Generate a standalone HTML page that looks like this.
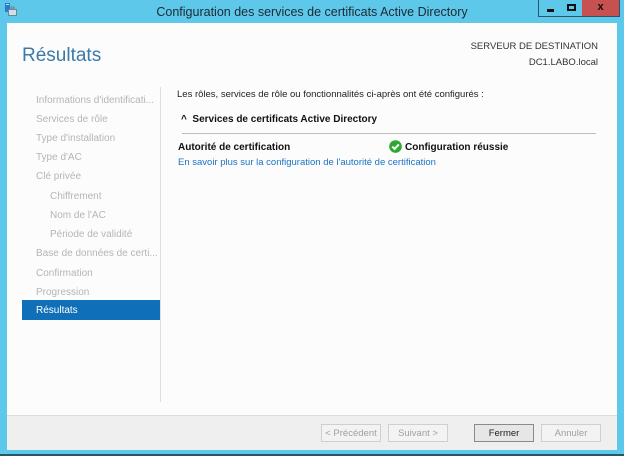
<!DOCTYPE html>
<html><head><meta charset="utf-8"><style>
*{margin:0;padding:0;box-sizing:border-box}
body{width:624px;height:456px;background:#5ec8ea;font-family:"Liberation Sans","DejaVu Sans",sans-serif;position:relative;overflow:hidden}
.abs{position:absolute}
.title{left:0;right:0;top:5px;text-align:center;font-size:12.5px;color:#1a2a33}
.content{left:7px;top:23px;width:610px;height:392px;background:#fcfcfc}
.footer{left:7px;top:415px;width:610px;height:35px;background:#efefef;border-top:1px solid #dcdcdc}
.bottom{left:0;top:454px;width:624px;height:2px;background:#2d5366}
.nav{font-size:10px;color:#b5b5b5}
.btn{top:424px;height:18px;border:1px solid #cfcfcf;background:#f3f3f3;font-size:9.5px;color:#a0a0a0;text-align:center;line-height:17px}
</style></head><body>
<svg class="abs" style="left:4px;top:3px" width="14" height="15" viewBox="0 0 14 15"><rect x="1" y="0" width="5" height="9" fill="#2a7bc8"/><rect x="2" y="1" width="3" height="1" fill="#bfe3f7"/><rect x="4" y="6" width="9" height="7" fill="#6c8494"/><rect x="5" y="7" width="7" height="5" fill="#cfe0ea"/><rect x="7" y="4" width="3" height="2" fill="none" stroke="#6c8494"/></svg>
<div class="abs title">Configuration des services de certificats Active Directory</div>
<div class="abs" style="left:538px;top:0;width:24px;height:17px;border:1px solid #2a5570;border-top:none;background:#5ec8ea"><div class="abs" style="left:8px;top:9px;width:7px;height:3px;background:#111"></div></div>
<div class="abs" style="left:561px;top:0;width:22px;height:17px;border:1px solid #2a5570;border-top:none;border-left:none;background:#5ec8ea"><div class="abs" style="left:6px;top:4px;width:9px;height:7px;border:2px solid #111"></div></div>
<div class="abs" style="left:582px;top:0;width:38px;height:17px;background:#c75050;border:1px solid #2a5570;border-top:none;border-left:none;color:#111;font-weight:bold;font-size:11px;text-align:center;line-height:15px">x</div>
<div class="abs content"></div>
<div class="abs" style="left:22px;top:45px;font-size:19px;color:#3a7aa8">Résultats</div>
<div class="abs" style="right:26px;top:39px;font-size:9.5px;color:#333;text-align:right;line-height:16px">SERVEUR DE DESTINATION<br>DC1.LABO.local</div>
<div class="abs" style="left:160px;top:87px;width:1px;height:315px;background:#dedede"></div>
<div class="abs nav" style="left:36px;top:95px">Informations d'identificati...</div>
<div class="abs nav" style="left:36px;top:114px">Services de rôle</div>
<div class="abs nav" style="left:36px;top:133px">Type d'installation</div>
<div class="abs nav" style="left:36px;top:152px">Type d'AC</div>
<div class="abs nav" style="left:36px;top:171px">Clé privée</div>
<div class="abs nav" style="left:50px;top:191px">Chiffrement</div>
<div class="abs nav" style="left:50px;top:210px">Nom de l'AC</div>
<div class="abs nav" style="left:50px;top:229px">Période de validité</div>
<div class="abs nav" style="left:36px;top:248px">Base de données de certi...</div>
<div class="abs nav" style="left:36px;top:268px">Confirmation</div>
<div class="abs nav" style="left:36px;top:287px">Progression</div>
<div class="abs" style="left:22px;top:300px;width:138px;height:20px;background:#0f6fb8;color:#fff;font-size:10px;padding:5px 0 0 14px">Résultats</div>
<div class="abs" style="left:177px;top:89px;font-size:9.5px;color:#222">Les rôles, services de rôle ou fonctionnalités ci-après ont été configurés :</div>
<div class="abs" style="left:181px;top:114px;font-size:10px;color:#111;font-weight:bold">^&nbsp;&nbsp;Services de certificats Active Directory</div>
<div class="abs" style="left:182px;top:133px;width:414px;height:1px;background:#bdbdbd"></div>
<div class="abs" style="left:178px;top:142px;font-size:10px;color:#111;font-weight:bold">Autorité de certification</div>
<svg class="abs" style="left:389px;top:140px" width="13" height="13" viewBox="0 0 13 13"><circle cx="6.5" cy="6.5" r="6.3" fill="#2fa82f"/><path d="M3.3 6.6 L5.6 8.9 L9.8 4.4" stroke="#fff" stroke-width="2" fill="none"/></svg>
<div class="abs" style="left:405px;top:142px;font-size:10px;color:#111;font-weight:bold">Configuration réussie</div>
<div class="abs" style="left:178px;top:157px;font-size:9.5px;color:#1a73c6">En savoir plus sur la configuration de l'autorité de certification</div>
<div class="abs footer"></div>
<div class="abs btn" style="left:321px;width:60px">&lt; Précédent</div>
<div class="abs btn" style="left:388px;width:60px">Suivant &gt;</div>
<div class="abs btn" style="left:474px;width:60px;border-color:#8a8a8a;background:#e6e6e6;color:#222">Fermer</div>
<div class="abs btn" style="left:541px;width:60px">Annuler</div>
<div class="abs bottom"></div>
</body></html>
